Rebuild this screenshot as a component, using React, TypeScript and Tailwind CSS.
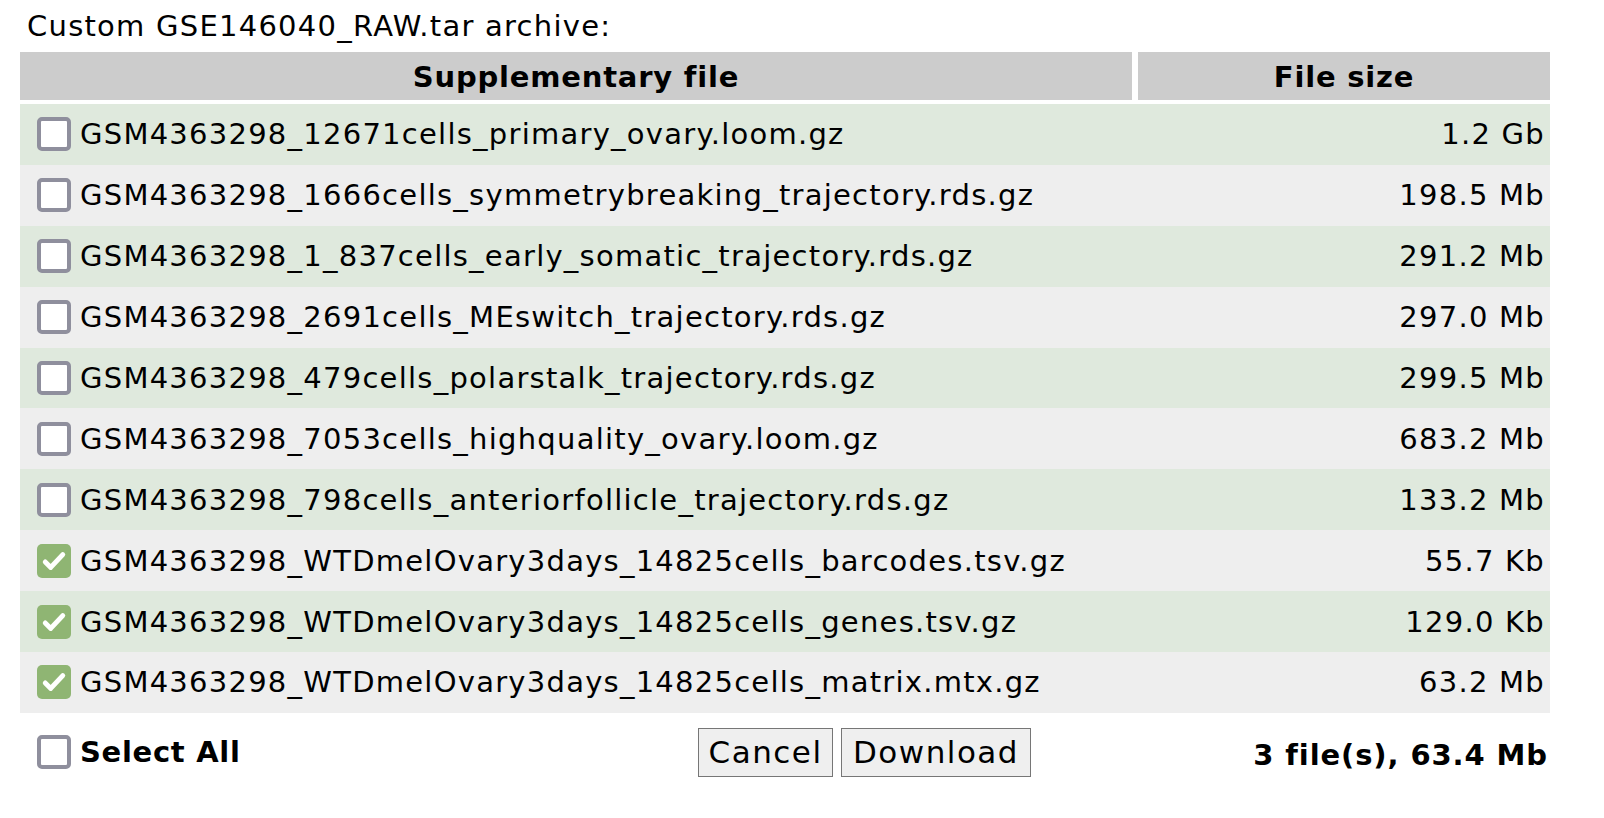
import React, { useState } from "react";

const files: [string, string, boolean][] = [
  ["GSM4363298_12671cells_primary_ovary.loom.gz", "1.2 Gb", false],
  ["GSM4363298_1666cells_symmetrybreaking_trajectory.rds.gz", "198.5 Mb", false],
  ["GSM4363298_1_837cells_early_somatic_trajectory.rds.gz", "291.2 Mb", false],
  ["GSM4363298_2691cells_MEswitch_trajectory.rds.gz", "297.0 Mb", false],
  ["GSM4363298_479cells_polarstalk_trajectory.rds.gz", "299.5 Mb", false],
  ["GSM4363298_7053cells_highquality_ovary.loom.gz", "683.2 Mb", false],
  ["GSM4363298_798cells_anteriorfollicle_trajectory.rds.gz", "133.2 Mb", false],
  ["GSM4363298_WTDmelOvary3days_14825cells_barcodes.tsv.gz", "55.7 Kb", true],
  ["GSM4363298_WTDmelOvary3days_14825cells_genes.tsv.gz", "129.0 Kb", true],
  ["GSM4363298_WTDmelOvary3days_14825cells_matrix.mtx.gz", "63.2 Mb", true],
];

const Box = ({ checked }: { checked: boolean }) =>
  checked ? (
    <span className="flex h-[34px] w-[34px] shrink-0 items-center justify-center rounded-[5px] bg-[#8fb573]">
      <svg viewBox="0 0 24 24" className="h-[28px] w-[28px]" fill="none" stroke="white" strokeWidth="4.2" strokeLinecap="round" strokeLinejoin="round">
        <path d="M4.5 12.8l4.7 4.7L19.5 6.5" />
      </svg>
    </span>
  ) : (
    <span className="block h-[34px] w-[34px] shrink-0 rounded-[5px] border-[4px] border-[#8f8f9d] bg-white" />
  );

export default function App() {
  const [sel] = useState(files);
  return (
    <div className="bg-white pl-[20px] pr-[54px] pt-[10px] text-[29px] leading-[32px] tracking-[1.25px] text-black font-['DejaVu_Sans','Verdana',sans-serif]">
      <div className="pl-[7px]">Custom GSE146040_RAW.tar archive:</div>
      <div className="mt-[10px] flex h-[48px] gap-[6px] font-bold tracking-[0.8px]">
        <div className="flex flex-1 items-center justify-center bg-[#cccccc] pt-[2px]">Supplementary file</div>
        <div className="flex w-[412px] items-center justify-center bg-[#cccccc] pt-[2px]">File size</div>
      </div>
      <div className="mt-[4px]">
        {sel.map(([name, size, checked], i) => (
          <div
            key={name}
            className={`flex h-[60.9px] items-center pl-[17px] pr-[5px] ${i % 2 === 0 ? "bg-[#dfe9dd]" : "bg-[#eeeeee]"}`}
          >
            <Box checked={checked} />
            <span className="ml-[9px] flex-1 whitespace-nowrap">{name}</span>
            <span className="whitespace-nowrap">{size}</span>
          </div>
        ))}
      </div>
      <div className="mt-[15px] flex items-center">
        <div className="flex w-[678px] items-center pl-[17px]">
          <Box checked={false} />
          <span className="ml-[9px] font-bold tracking-[0.7px]">Select All</span>
        </div>
        <div className="flex gap-[8px]">
          <button className="h-[49px] w-[135px] border border-[#767676] bg-[#efefef] text-[31px] tracking-[1.5px]">Cancel</button>
          <button className="h-[49px] w-[190px] border border-[#767676] bg-[#efefef] text-[31px] tracking-[1.5px]">Download</button>
        </div>
        <div className="mt-[6px] flex-1 pr-[2px] text-right font-bold tracking-[0.9px]">3 file(s), 63.4 Mb</div>
      </div>
    </div>
  );
}
